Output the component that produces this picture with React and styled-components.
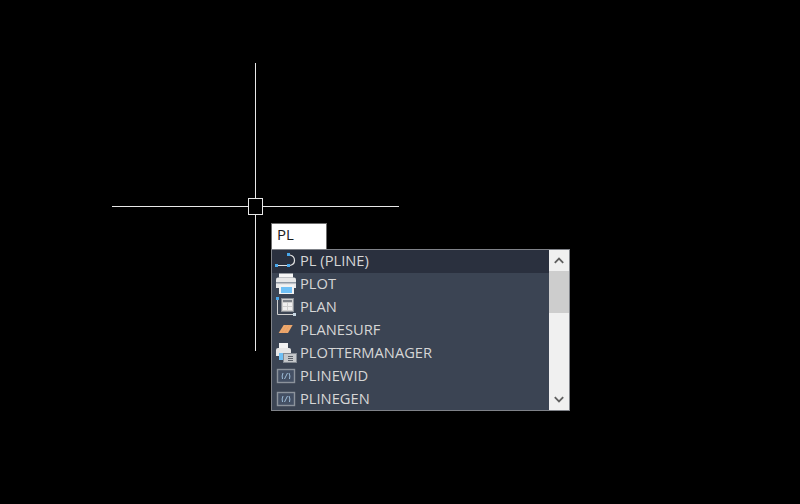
import React from "react";
import styled, { createGlobalStyle } from "styled-components";

const GlobalStyle = createGlobalStyle`
  html, body {
    margin: 0;
    padding: 0;
    background: #000000;
  }
`;

const Icon = ({ children }) => (
  <svg width="27" height="23" viewBox="0 0 27 23">
    {children}
  </svg>
);

const PLineIcon = () => (
  <Icon>
    <path d="M6 15.5H15" fill="none" stroke="#e0e0e0" strokeWidth="1" />
    <path d="M18 5Q22.5 6 22.5 10.5Q22.5 14.5 18 15.5" fill="none" stroke="#e0e0e0" strokeWidth="1.2" />
    <rect x="3" y="14" width="3" height="3" fill="#4aa8ec" />
    <rect x="15" y="14" width="3" height="3" fill="#4aa8ec" />
    <rect x="15" y="3" width="3" height="3" fill="#4aa8ec" />
  </Icon>
);

const PlotIcon = () => (
  <Icon>
    <rect x="7" y="0.5" width="14" height="4" fill="#f6f6f6" />
    <path d="M4 6.5Q4 4.5 6 4.5H22Q24 4.5 24 6.5V15H4Z" fill="#e8e8e8" />
    <rect x="4" y="9" width="20" height="1.5" fill="#8f98a3" />
    <rect x="7" y="12" width="15" height="9" fill="#f2f2f2" />
    <rect x="9" y="14" width="11" height="6" fill="#6fc0f5" />
  </Icon>
);

const PlanIcon = () => (
  <Icon>
    <path d="M5.5 3V18.5H22" fill="none" stroke="#cfcfcf" strokeWidth="1" />
    <rect x="4" y="1" width="3" height="3" fill="#4aa8ec" />
    <rect x="21" y="17" width="3" height="3" fill="#c8d8e4" />
    <rect x="9.5" y="2.5" width="12" height="13" fill="#cfcfcf" stroke="#8a8f96" />
    <rect x="11" y="4" width="9" height="2" fill="#7d8289" />
    <rect x="11" y="7" width="4" height="3" fill="#f0f0f0" />
    <rect x="16" y="7" width="4" height="3" fill="#f0f0f0" />
    <rect x="11" y="11" width="4" height="3" fill="#f0f0f0" />
    <rect x="16" y="11" width="4" height="3" fill="#f0f0f0" />
  </Icon>
);

const SurfIcon = () => (
  <Icon>
    <path d="M11.7 6H20.7L16 14H6.7Z" fill="#eea76c" />
    <path d="M14.5 6L9.8 14M17.5 6L12.8 14" stroke="#dd9a62" strokeWidth="0.5" />
  </Icon>
);

const PlotterIcon = () => (
  <Icon>
    <rect x="7" y="1" width="9" height="5" fill="#f2f2f2" />
    <path d="M4 8Q4 6 6 6H17Q19 6 19 8V14H4Z" fill="#e6e6e6" />
    <rect x="7" y="11" width="7" height="7" fill="#6fc0f5" />
    <rect x="11" y="11" width="14" height="10" fill="#858b93" />
    <rect x="12" y="12" width="12" height="8" fill="#c4c7ca" />
    <rect x="16" y="14" width="5" height="1" fill="#5a6068" />
    <rect x="16" y="16" width="5" height="1" fill="#5a6068" />
    <rect x="16" y="18" width="5" height="1" fill="#5a6068" />
  </Icon>
);

const VarIcon = () => (
  <Icon>
    <rect x="5.5" y="4.5" width="17" height="13" fill="#445064" stroke="#8c939c" strokeWidth="1.4" />
    <path d="M11 8Q9.5 11 10.5 14M17 8Q18.5 11 17.5 14" fill="none" stroke="#9dbcd8" strokeWidth="1" />
    <path d="M12.5 14L15.5 8" stroke="#9dbcd8" strokeWidth="1" />
  </Icon>
);

const items = [
  { label: "PL (PLINE)", icon: <PLineIcon />, active: true },
  { label: "PLOT", icon: <PlotIcon /> },
  { label: "PLAN", icon: <PlanIcon /> },
  { label: "PLANESURF", icon: <SurfIcon /> },
  { label: "PLOTTERMANAGER", icon: <PlotterIcon /> },
  { label: "PLINEWID", icon: <VarIcon /> },
  { label: "PLINEGEN", icon: <VarIcon /> },
];

const App = () => {
  return (
    <Canvas>
      <GlobalStyle />
      <CrossVertical />
      <CrossHorizontal />
      <PickBox />
      <CommandWrap>
        <CommandInput>PL</CommandInput>
        <Popup>
          <List>
            {items.map((item) => (
              <Row key={item.label} $active={item.active}>
                <IconSlot>{item.icon}</IconSlot>
                <Label>{item.label}</Label>
              </Row>
            ))}
          </List>
          <ScrollBar>
            <ScrollButton>
              <svg width="10" height="7" viewBox="0 0 10 7">
                <path d="M0.8 5.8L5 1.6L9.2 5.8" fill="none" stroke="#606060" strokeWidth="1.8" />
              </svg>
            </ScrollButton>
            <ScrollTrack>
              <ScrollThumb />
            </ScrollTrack>
            <ScrollButton>
              <svg width="10" height="7" viewBox="0 0 10 7">
                <path d="M0.8 1.2L5 5.4L9.2 1.2" fill="none" stroke="#606060" strokeWidth="1.8" />
              </svg>
            </ScrollButton>
          </ScrollBar>
        </Popup>
      </CommandWrap>
    </Canvas>
  );
};

export default App;

const Canvas = styled.div`
  position: relative;
  width: 800px;
  height: 504px;
  background-color: #000000;
  overflow: hidden;
  font-family: "Open Sans", "Noto Sans", sans-serif;
`;

const CrossVertical = styled.div`
  position: absolute;
  left: 255px;
  top: 63px;
  width: 1px;
  height: 288px;
  background-color: #e8e8e8;
`;

const CrossHorizontal = styled.div`
  position: absolute;
  left: 112px;
  top: 206px;
  width: 287px;
  height: 1px;
  background-color: #e8e8e8;
`;

const PickBox = styled.div`
  position: absolute;
  left: 248px;
  top: 198px;
  width: 13px;
  height: 15px;
  border: 1px solid #e8e8e8;
  background-color: #000000;
`;

const CommandWrap = styled.div`
  position: absolute;
  left: 271px;
  top: 223px;
  display: flex;
  flex-direction: column;
  width: 299px;
`;

const CommandInput = styled.div`
  box-sizing: border-box;
  width: 56px;
  height: 26px;
  padding-left: 5px;
  border: 1px solid #6e6e6e;
  border-bottom: none;
  background-color: #ffffff;
  color: #1a1a1a;
  font-size: 15px;
  line-height: 21px;
`;

const Popup = styled.div`
  box-sizing: border-box;
  display: flex;
  width: 299px;
  height: 162px;
  border: 1px solid #7f8288;
  background-color: #3b4453;
`;

const List = styled.div`
  flex: 1;
  display: flex;
  flex-direction: column;
`;

const Row = styled.div`
  display: flex;
  align-items: center;
  height: 23px;
  background-color: ${(props) => (props.$active ? "#2a303e" : "transparent")};
`;

const IconSlot = styled.div`
  display: flex;
  width: 27px;
  height: 23px;
  flex-shrink: 0;
`;

const Label = styled.span`
  margin-left: 1px;
  padding-bottom: 2px;
  color: #d6d6d6;
  font-size: 14.7px;
  line-height: 19px;
  white-space: pre;
`;

const ScrollBar = styled.div`
  display: flex;
  flex-direction: column;
  width: 20px;
  background-color: #f0f0f0;
`;

const ScrollButton = styled.div`
  display: flex;
  align-items: center;
  justify-content: center;
  height: 21px;
`;

const ScrollTrack = styled.div`
  flex: 1;
`;

const ScrollThumb = styled.div`
  height: 42px;
  background-color: #cdcdcd;
`;
